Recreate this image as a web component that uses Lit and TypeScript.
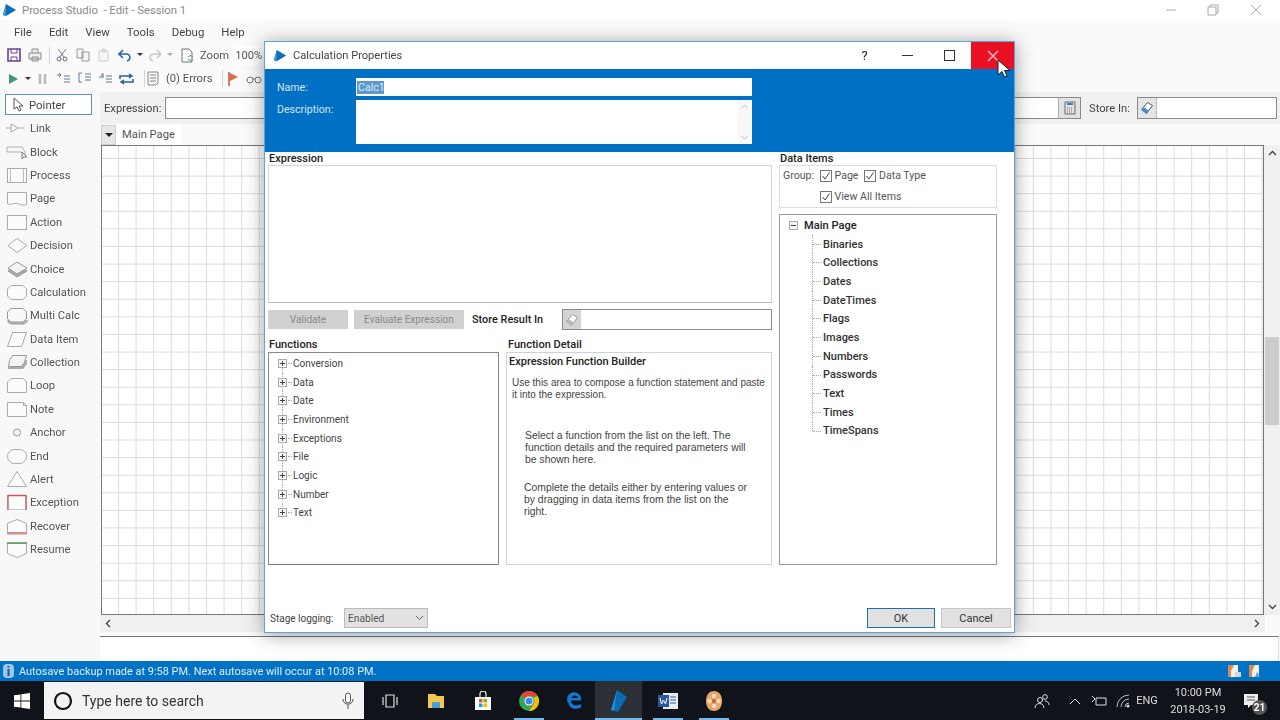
import { LitElement, html, css, svg } from "lit";
import { customElement } from "lit/decorators.js";

const S = (w: number, h: number, body: unknown) =>
  html`<svg width=${w} height=${h} viewBox="0 0 ${w} ${h}" fill="none">${body}</svg>`;

const palette: [string, unknown][] = [
  ["Link", svg`<path d="M6 11h5M18 11h6M11 7l7 4-7 4z" stroke="#a8a8a8"/>`],
  ["Block", svg`<path d="M7 6h15l3 5v3M7 6v5h15" stroke="#b0b0b0"/><path d="M22 11l0 7 2-2 3 0z" fill="#fff" stroke="#777"/>`],
  ["Process", svg`<rect x="7.5" y="4.5" width="19" height="14" stroke="#aaa" fill="#fbfbfb"/><path d="M10.5 5v13M23.5 5v13" stroke="#bbb"/>`],
  ["Page", svg`<path d="M7.5 5.5h19v12c-6 2-7-2-12-1s-5 1-7 0z" stroke="#aaa" fill="#fbfbfb"/>`],
  ["Action", svg`<rect x="7.5" y="4.5" width="19" height="14" stroke="#aaa" fill="#fbfbfb"/>`],
  ["Decision", svg`<path d="M8 11.5l9-7 10 7-10 7z" stroke="#aaa" fill="#fbfbfb"/>`],
  ["Choice", svg`<path d="M8 13l9 6 10-6-3-2-14 0z" fill="#aaa" stroke="#999"/><path d="M8 10l9-6 10 6-10 6z" stroke="#999" fill="#f4f4f4"/>`],
  ["Calculation", svg`<path d="M11 4.5h12l3.5 3.5v7L23 18.5H11L7.5 15V8z" stroke="#aaa" fill="#fbfbfb"/>`],
  ["Multi Calc", svg`<path d="M8 16v2l3 2h13l3-2v-2" stroke="#999" fill="#bbb"/><path d="M11 4.5h12l3.5 3.5v7L23 18H11L7.5 15V8z" stroke="#999" fill="#f8f8f8"/>`],
  ["Data Item", svg`<path d="M12.5 4.5h14l-5 14h-14z" stroke="#aaa" fill="#fbfbfb"/>`],
  ["Collection", svg`<path d="M8 15v3h15l4-5V9z" fill="#aaa"/><path d="M12.5 4.5h14l-2 7-3 4h-13l1-6z" stroke="#999" fill="#f4f4f4"/>`],
  ["Loop", svg`<path d="M11 4.5h12l3.5 3.5v10.5h-19V8z" stroke="#aaa" fill="#fbfbfb"/>`],
  ["Note", svg`<path d="M7.5 4.5h16l3 3v11h-19zM23.5 4.5v3h3" stroke="#aaa" fill="#fbfbfb"/>`],
  ["Anchor", svg`<circle cx="17" cy="11.5" r="3.5" stroke="#999" fill="#f5f5f5"/>`],
  ["End", svg`<rect x="7.5" y="4.5" width="19" height="14" rx="7" stroke="#aaa" fill="#fbfbfb"/>`],
  ["Alert", svg`<path d="M17 3.5l9.5 15h-19z" stroke="#aaa" fill="#fbfbfb"/>`],
  ["Exception", svg`<rect x="7.5" y="4.5" width="19" height="14" stroke="#c9c9c9" fill="#fbfbfb"/><path d="M8 4v15M26 4v15M8 4.5h18" stroke="#c5565c" stroke-width="1.3"/>`],
  ["Recover", svg`<path d="M7.5 8.5l9.5-4 9.5 4v9h-19z" stroke="#aaa" fill="#fbfbfb"/><path d="M7 18.5h20" stroke="#d98a8a" stroke-width="2"/>`],
  ["Resume", svg`<path d="M7.5 5.5h19v10l-9.5 4-9.5-4z" stroke="#aaa" fill="#fbfbfb"/><path d="M7 5h20" stroke="#5f9a6a" stroke-width="1.6"/>`],
];

const functions = ["Conversion", "Data", "Date", "Environment", "Exceptions", "File", "Logic", "Number", "Text"];
const dataItems = ["Binaries", "Collections", "Dates", "DateTimes", "Flags", "Images", "Numbers", "Passwords", "Text", "Times", "TimeSpans"];

const logo = (h: number) =>
  html`<svg width=${h} height=${h} viewBox="0 0 16 16"><path d="M4 2l10 6-10 6-3-1z" fill="#0f6cb8"/><path d="M4 2L1 13l3 1z" fill="#2d9be0"/></svg>`;
const eraser = (dim: boolean) =>
  html`<span class="eraser ${dim ? "dim" : ""}"><svg width="14" height="14" viewBox="0 0 14 14"><path d="M1.5 8.5l6-7 5 3-6 8z" fill="#fff" stroke=${dim ? "#999" : "#456"}/><path d="M1.5 8.5l5 4 2-3-4-3z" fill=${dim ? "#bbb" : "#3f8fd0"}/></svg></span>`;
const check = html`<span class="cb"><svg width="12" height="12" viewBox="0 0 12 12"><path d="M2.5 6l2.5 3 4.5-6.5" stroke="#444" fill="none"/></svg></span>`;

@customElement("app-root")
export class AppRoot extends LitElement {
  static styles = css`
    :host { display: block; width: 1280px; height: 720px; overflow: hidden; position: relative;
      font-family: Roboto, "Liberation Sans", sans-serif; font-size: 11.2px; color: #333; background: #fafafa; }
    .page { position: relative; width: 1280px; height: 720px; display: flex; flex-direction: column; filter: blur(0.35px); }
    .title { height: 20px; flex: none; display: flex; align-items: center; background: #fff; color: #8a8a8a; padding: 0 3px 0 2px; font-size: 11.3px; }
    .title .tx { margin-left: 4px; }
    .title .grow { flex: 1; }
    .wc { width: 42.5px; display: flex; justify-content: center; }
    .menu { height: 23px; flex: none; display: flex; align-items: center; padding-left: 14px; gap: 17px; font-size: 11.4px; color: #444; }
    .tbar { flex: none; display: flex; align-items: center; }
    .t1 { height: 24px; padding-left: 3px; }
    .t2 { height: 23px; padding-left: 2px; }
    .ti { width: 21px; display: flex; justify-content: center; flex: none; }
    .tn { width: 9px; display: flex; justify-content: center; flex: none; }
    .tw { width: 16px; display: flex; justify-content: center; flex: none; }
    .ts { width: 1px; height: 17px; background: #d5d5d5; flex: none; }
    .m4 { margin-left: 4px; margin-right: 1px; }
    .m7 { margin-left: 7px; }
    .m9 { margin-left: 9px; }
    .m2 { margin-left: 2px; }
    .zoom { margin-left: 3px; color: #555; }
    .pct { margin-left: 6px; background: #fff; padding: 3px 4px 3px 0; color: #555; }
    .err { margin-left: 5px; color: #555; }
    .main { flex: 1; min-height: 0; display: flex; }
    .palette { width: 100px; flex: none; padding: 4px 0 0 5px; box-sizing: border-box; background: #f8f8f8; }
    .ptr { width: 85px; height: 19px; border: 1px solid #5b93b5; background: #fff; display: flex; align-items: center; margin-bottom: 2px; box-sizing: content-box; font-size: 11.4px; color: #444; }
    .ptr svg { margin: 0 4px 0 6px; }
    .pi { height: 23.4px; display: flex; align-items: center; margin-left: -5px; color: #555; font-size: 11.2px; }
    .pi svg { flex: none; }
    .content { flex: 1; min-width: 0; display: flex; flex-direction: column; }
    .ebar { height: 32px; margin-top: 2px; flex: none; display: flex; align-items: center; background: #f0f0f0; padding-left: 4px; color: #444; }
    .expl { width: 55px; white-space: nowrap; }
    .field { height: 22px; background: #fff; border: 1px solid #8a8a8a; box-sizing: border-box; display: flex; }
    .f1 { width: 916px; margin-left: 6px; justify-content: flex-end; }
    .f2 { width: 140px; margin-left: 8px; }
    .calc { width: 21px; background: #e2e2e2; border-left: 1px solid #aaa; display: flex; align-items: center; justify-content: center; }
    .store { margin-left: 8px; width: 40px; white-space: nowrap; }
    .eraser { width: 18px; background: #e4e4e4; border-right: 1px solid #bbb; display: flex; align-items: center; justify-content: center; flex: none; }
    .eraser.dim { background: #d4d4d4; border: 0; }
    .tabs { height: 21px; flex: none; display: flex; align-items: flex-end; padding-left: 1px; box-sizing: border-box; }
    .tabdrop { width: 15px; height: 20px; background: #e6e6e6; border: 1px solid #ccc; box-sizing: border-box; display: flex; align-items: center; justify-content: center; }
    .tab { width: 65px; height: 21px; background: #fff; display: flex; align-items: center; justify-content: center; color: #555; }
    .cwrap { height: 470px; flex: none; display: flex; }
    .canvas { width: 1163px; margin-left: 1px; box-sizing: border-box; border: 1px solid #777; border-right-width: 1px;
      background-color: #fff;
      background-image: linear-gradient(#dadada 1px, transparent 1px), linear-gradient(90deg, #dadada 1px, transparent 1px);
      background-size: 17.6px 17.6px; background-position: 16px 12px; }
    .vscroll { flex: 1; background: #f0f0f0; display: flex; flex-direction: column; align-items: center; justify-content: space-between; padding: 5px 0; box-sizing: border-box; position: relative; }
    .thumb { position: absolute; top: 192px; left: 1px; width: 14px; height: 88px; background: #cdcdcd; }
    .hscroll { height: 17px; width: 1165px; flex: none; background: #f0f0f0; display: flex; align-items: center; justify-content: space-between; padding: 0 5px; box-sizing: border-box; }
    .bottom { height: 25px; margin-top: 4px; flex: none; background: #fff; border-top: 1px solid #777; border-right: 1px solid #ddd; width: 1179px; box-sizing: border-box; }
    .status { height: 20px; flex: none; background: #0072c6; display: flex; align-items: center; color: #e3eef7; font-size: 10.95px; padding-left: 2px; gap: 4px; }
    .status .grow { flex: 1; }
    .status .sr { display: flex; gap: 7px; padding-right: 18px; }
    .taskbar { height: 39px; flex: none; background: #10141a; display: flex; align-items: center; color: #fff; }
    .win { width: 44px; display: flex; justify-content: center; }
    .search { width: 320px; height: 37px; margin-right: 3px; background: #f3f3f3; color: #333; display: flex; align-items: center; box-sizing: border-box; padding: 0 9px 0 9px; font-size: 14px; }
    .search .q { flex: 1; margin-left: 9px; }
    .tk { width: 46.3px; height: 39px; display: flex; align-items: center; justify-content: center; position: relative; box-sizing: border-box; flex: none; }
    .tk.on::after { content: ""; position: absolute; left: 8px; right: 8px; bottom: 0; height: 2px; background: #76b9ed; }
    .tk.act { background: #2b3036; margin-left: -3px; margin-right: 3px; }
    .tk.act::after { left: 0; right: 0; }
    .tray { margin-left: auto; display: flex; align-items: center; color: #ddd; font-size: 11px; }
    .ty { width: 24px; display: flex; justify-content: center; }
    .clock { width: 78px; text-align: center; line-height: 17px; font-size: 11px; }
    .noti { width: 30px; margin-right: 14px; position: relative; display: flex; justify-content: center; margin-left: -1px; }
    .badge { position: absolute; left: 16px; top: 7px; width: 15px; height: 15px; border-radius: 50%; background: #555; color: #fff; font-size: 10px; font-weight: 700; display: flex; align-items: center; justify-content: center; }

    /* Dialog floats above the window */
    .dlg { position: absolute; left: 264px; top: 41px; width: 751px; height: 592px; background: #fff; border: 1px solid #5aa6dc; box-sizing: border-box; display: flex; flex-direction: column; box-shadow: 0 2px 18px rgba(0,0,0,.38); }
    .dt { height: 27px; flex: none; display: flex; align-items: center; padding-left: 8px; color: #444; font-size: 11.1px; }
    .dt .tx { margin-left: 5px; }
    .dt .grow { flex: 1; }
    .db { width: 42.7px; height: 27px; display: flex; align-items: center; justify-content: center; color: #222; font-size: 13px; flex: none; }
    .db.x { background: #e81123; }
    .dhead { height: 83px; flex: none; background: #0070c4; display: grid; grid-template-columns: 79px 396px; grid-template-rows: 18px 44px; row-gap: 4px; align-content: start; padding: 9px 0 0 12px; color: #d5e6f5; box-sizing: border-box; font-size: 10.6px; }
    .dhead .lb { align-self: center; }
    .dhead .lb2 { align-self: start; padding-top: 3px; }
    .nm { background: #fff; display: flex; align-items: center; padding-left: 1px; color: #fff; }
    .sel { background: #5a98d0; color: #dfe9f3; padding: 0 1px; font-size: 10.6px; width: 27px; box-sizing: border-box; }
    .ds { background: #fff; display: flex; justify-content: flex-end; }
    .sb { width: 15px; background: #f8f8f8; display: flex; flex-direction: column; justify-content: space-between; align-items: center; padding: 4px 0; box-sizing: border-box; }
    .dbody { flex: 1; min-height: 0; display: grid; grid-template-columns: 504px 218px; column-gap: 7px; padding-left: 3px; align-content: start; }
    .sec { font-weight: 500; color: #222; font-size: 11px; height: 13px; line-height: 13px; padding-left: 1px; }
    .col { display: flex; flex-direction: column; }
    .exp { height: 138px; border: 1px solid #d5d5d5; border-bottom-color: #bbb; box-sizing: border-box; background: #fff; }
    .vr { margin-top: 6px; height: 21px; display: flex; align-items: center; }
    .btn { height: 19px; background: #d0d0d0; color: #8a8a8a; display: flex; align-items: center; justify-content: center; font-size: 10.1px; flex: none; }
    .b1 { width: 80px; }
    .b2 { width: 110px; margin-left: 6px; }
    .sri { margin-left: 8px; font-weight: 500; color: #222; font-size: 10.9px; width: 90px; white-space: nowrap; }
    .srf { flex: 1; height: 21px; border: 1px solid #8a8a8a; box-sizing: border-box; display: flex; }
    .two { display: grid; grid-template-columns: 231px 266px; column-gap: 7px; margin-top: 8px; }
    .two .sec { margin-bottom: 1px; }
    .fd { padding-left: 2px; }
    .tree { height: 213px; border: 1px solid #888; border-bottom-color: #777; box-sizing: border-box; padding-top: 1px; }
    .row { height: 18.7px; display: flex; align-items: center; position: relative; color: #444; font-size: 10px; padding-left: 9px; }
    .row::before { content: ""; position: absolute; left: 13px; top: 0; bottom: 0; border-left: 1px dotted #aaa; }
    .row:first-child::before { top: 9px; }
    .row:last-child::before { bottom: 9px; }
    .row i { position: relative; width: 9px; height: 9px; border: 1px solid #aaa; background: #f5f5f5; box-sizing: border-box; flex: none; margin-right: 1px; }
    .row i::before { content: ""; position: absolute; left: 1px; right: 1px; top: 3px; height: 1px; background: #444; }
    .row i.p::after { content: ""; position: absolute; top: 1px; bottom: 1px; left: 3px; width: 1px; background: #444; }
    .row b { font-weight: 400; width: 4px; border-top: 1px dotted #aaa; margin-right: 1px; flex: none; position: relative; }
    .detail { height: 213px; border: 1px solid #ccd3da; box-sizing: border-box; padding: 2px 2px; }
    .dtitle { font-weight: 500; color: #222; font-size: 11px; height: 13px; line-height: 13px; }
    .dp { font-family: "Liberation Sans", Arial, sans-serif; font-size: 10.4px; line-height: 12px; color: #444; margin: 0; white-space: nowrap; }
    .p1 { margin: 9px 0 0 3px; font-size: 10px; }
    .p2 { margin: 29px 0 0 16px; }
    .p3 { margin: 16px 0 0 15px; }
    .grp { height: 43px; border: 1px solid #ddd; box-sizing: border-box; display: grid; grid-template-columns: 37px auto auto 1fr; grid-template-rows: 19px 23px; align-items: center; padding-left: 3px; color: #555; font-size: 10.6px; }
    .ck { display: flex; align-items: center; gap: 2.5px; margin-right: 6px; }
    .ck.span { grid-column: 2 / 5; }
    .cb { width: 12px; height: 12px; border: 1px solid #777; box-sizing: border-box; display: flex; align-items: center; justify-content: center; background: #fff; }
    .cb svg { flex: none; }
    .dtree { margin-top: 6px; height: 351px; border: 1px solid #999; box-sizing: border-box; padding: 1px 0 0 9px; }
    .droot { height: 18.7px; display: flex; align-items: center; font-weight: 500; color: #222; font-size: 11.1px; }
    .droot .mn { position: relative; width: 9px; height: 9px; border: 1px solid #aaa; background: #f5f5f5; box-sizing: border-box; margin-right: 6px; flex: none; }
    .droot .mn::before { content: ""; position: absolute; left: 1px; right: 1px; top: 3px; height: 1px; background: #444; }
    .dc { height: 18.7px; margin-left: 23px; padding-left: 10px; display: flex; align-items: center; font-weight: 500; color: #333; font-size: 11px; border-left: 1px dotted #aaa; position: relative; }
    .dc:last-child { border-left-color: transparent; }
    .dc:last-child::after { content: ""; position: absolute; left: -1px; top: 0; height: 9px; border-left: 1px dotted #aaa; }
    .dc::before { content: ""; position: absolute; left: 0; width: 8px; top: 9px; border-top: 1px dotted #aaa; }
    .foot { flex: none; display: flex; align-items: center; margin-bottom: 4px; height: 20px; padding: 0 3px 0 5px; }
    .foot .lbl { width: 74px; color: #444; font-size: 10px; white-space: nowrap; }
    .dd { width: 84px; height: 20px; background: #e2e2e2; border: 1px solid #bbb; box-sizing: border-box; display: flex; align-items: center; justify-content: space-between; padding: 0 3px; color: #555; font-size: 10.2px; }
    .foot .grow { flex: 1; }
    .ok, .cancel { height: 20px; background: #e1e1e1; display: flex; align-items: center; justify-content: center; color: #333; font-size: 11px; box-sizing: border-box; }
    .ok { width: 68px; border: 1.5px solid #1b6fb5; margin-right: 6px; }
    .cancel { width: 70px; border: 1px solid #c5c5c5; }
    .cursor { position: absolute; left: 997px; top: 59px; }
  `;

  render() {
    return html`<div class="page">
      <div class="title">
        ${logo(16)}<span class="tx">Process Studio&nbsp; - Edit - Session 1</span><span class="grow"></span>
        <span class="wc">${S(12, 12, svg`<path d="M1 6h10" stroke="#aaa"/>`)}</span>
        <span class="wc">${S(12, 12, svg`<path d="M3 3V1h8v8H9M1 3h8v8H1z" stroke="#aaa"/>`)}</span>
        <span class="wc">${S(12, 12, svg`<path d="M1 1l10 10M11 1L1 11" stroke="#aaa"/>`)}</span>
      </div>
      <div class="menu"><span>File</span><span>Edit</span><span>View</span><span>Tools</span><span>Debug</span><span>Help</span></div>
      <div class="tbar t1">
        <span class="ti">${S(14, 14, svg`<path d="M1 1h12v12H1z" stroke="#6a3f9a" stroke-width="1.6"/><path d="M4 1v4h6V1M4 13V9h6v4" stroke="#6a3f9a"/>`)}</span>
        <span class="ti">${S(14, 14, svg`<path d="M4 5V1h6v4M1 5h12v6H1zM4 9h6v4H4z" stroke="#888" fill="#eee"/>`)}</span>
        <span class="ts m4"></span>
        <span class="ti">${S(14, 14, svg`<path d="M3 1l6 8M11 1L5 9" stroke="#777"/><circle cx="4" cy="11" r="2" stroke="#5a6d85"/><circle cx="10" cy="11" r="2" stroke="#5a6d85"/>`)}</span>
        <span class="ti">${S(14, 14, svg`<path d="M1 1h6v9H1zM6 4h7v9H6z" stroke="#999" fill="#f4f4f4"/>`)}</span>
        <span class="ti">${S(14, 14, svg`<path d="M2 3h9v10H2zM5 1h3v3H5z" stroke="#ccc" fill="#f6f6f6"/>`)}</span>
        <span class="ti">${S(14, 14, svg`<path d="M5 2L1 6l4 4M1 6h7c5 0 5 6 1 7" stroke="#2a66a8" stroke-width="1.6"/>`)}</span>
        <span class="tn">${S(6, 4, svg`<path d="M0 0h6L3 3z" fill="#333"/>`)}</span>
        <span class="ti">${S(14, 14, svg`<path d="M9 2l4 4-4 4M13 6H6c-5 0-5 6-1 7" stroke="#c8c8c8" stroke-width="1.5"/>`)}</span>
        <span class="tn">${S(6, 4, svg`<path d="M0 0h6L3 3z" fill="#aaa"/>`)}</span>
        <span class="ti m2">${S(14, 15, svg`<path d="M2 1h7l3 3v10H2z" stroke="#777" fill="#fafafa"/><path d="M8 11a3 3 0 005 0M8 9a3 3 0 015 0" stroke="#5a9a7a"/>`)}</span>
        <span class="zoom">Zoom</span><span class="pct">100%</span>
      </div>
      <div class="tbar t2">
        <span class="ti">${S(12, 12, svg`<path d="M2 1l9 5-9 5z" fill="#3f9a78"/>`)}</span>
        <span class="tn">${S(6, 4, svg`<path d="M0 0h6L3 3z" fill="#333"/>`)}</span>
        <span class="ti">${S(12, 12, svg`<path d="M3 1v10M8 1v10" stroke="#bbb" stroke-width="2.6"/>`)}</span>
        <span class="ti">${S(15, 14, svg`<path d="M1 3h4M3 1l2 2-2 2M8 4h6M8 7h6M8 10h6" stroke="#5a7a95"/>`)}</span>
        <span class="ti">${S(15, 14, svg`<path d="M5 1H2v9h3M8 2h6M8 5h6M8 8h6" stroke="#5a7a95"/>`)}</span>
        <span class="ti">${S(15, 14, svg`<path d="M1 5h3V2M5 1v5M8 4h6M8 7h6M8 10h6" stroke="#5a7a95"/>`)}</span>
        <span class="ti">${S(15, 14, svg`<path d="M1 7V4h11M10 2l3 2-3 2M14 7v3H3M5 12l-3-2 3-2" stroke="#2a5f95" stroke-width="1.5"/>`)}</span>
        <span class="ts m7"></span>
        <span class="tw">${S(13, 15, svg`<path d="M1 1h10v11l-2 2H1zM3 4h6M3 7h6M3 10h6" stroke="#888" fill="#f5f5f5"/>`)}</span>
        <span class="err">(0) Errors</span>
        <span class="ts m9"></span>
        <span class="ti">${S(12, 14, svg`<path d="M2 0v14" stroke="#b5482d" stroke-width="1.4"/><path d="M3 1l8 4-8 4z" fill="#e06a3c"/>`)}</span>
        <span class="ti">${S(16, 10, svg`<circle cx="4" cy="6" r="3" stroke="#777"/><circle cx="12" cy="6" r="3" stroke="#777"/><path d="M7 5h2" stroke="#777"/>`)}</span>
      </div>
      <div class="main">
        <div class="palette">
          <div class="ptr">${S(13, 15, svg`<path d="M2 1v11l3-2 2 4 2-1-2-4h4z" fill="#fff" stroke="#555"/>`)}Pointer</div>
          ${palette.map(([n, i]) => html`<div class="pi">${S(30, 23, i)}${n}</div>`)}
        </div>
        <div class="content">
          <div class="ebar">
            <span class="expl">Expression:</span>
            <span class="field f1"><span class="calc">${S(12, 14, svg`<path d="M1 1h10v12H1z" stroke="#667"/><path d="M3 3h6" stroke="#4477aa" stroke-width="2"/><path d="M3 7h6M3 9h6M3 11h6" stroke="#778" stroke-dasharray="1 1"/>`)}</span></span>
            <span class="store">Store In:</span>
            <span class="field f2">${eraser(false)}</span>
          </div>
          <div class="tabs"><span class="tabdrop">${S(8, 5, svg`<path d="M0 0h8L4 4z" fill="#222"/>`)}</span><span class="tab">Main Page</span></div>
          <div class="cwrap">
            <div class="canvas"></div>
            <div class="vscroll">
              ${S(9, 6, svg`<path d="M1 5l3.5-3.5L8 5" stroke="#444" stroke-width="1.4"/>`)}
              <span class="thumb"></span>
              ${S(9, 6, svg`<path d="M1 1l3.5 3.5L8 1" stroke="#444" stroke-width="1.4"/>`)}
            </div>
          </div>
          <div class="hscroll">
            ${S(6, 9, svg`<path d="M5 1L1.5 4.5 5 8" stroke="#444" stroke-width="1.4"/>`)}
            ${S(6, 9, svg`<path d="M1 1l3.5 3.5L1 8" stroke="#444" stroke-width="1.4"/>`)}
          </div>
          <div class="bottom"></div>
        </div>
      </div>
      <div class="status">
        ${S(13, 16, svg`<rect x="1" y="1" width="11" height="14" rx="4" fill="#9fc6e6"/><path d="M6.5 6v7M6.5 3v1.5" stroke="#0b5c9c" stroke-width="2"/>`)}
        <span>Autosave backup made at 9:58 PM. Next autosave will occur at 10:08 PM.</span>
        <span class="grow"></span>
        <span class="sr">
          ${S(14, 14, svg`<path d="M1 1h10v12H1z" fill="#f1f1f1"/><path d="M1 1h6l-3 6v6H1z" fill="#d88a50"/><rect x="8" y="8" width="6" height="5" fill="#cfd8e0"/>`)}
          ${S(14, 14, svg`<path d="M1 1h10v12H1z" fill="#f1f1f1"/><path d="M1 1h6l-3 6v6H1z" fill="#d88a50"/><path d="M9 8l3 5H7z" fill="#6aa0d0"/>`)}
        </span>
      </div>
      <div class="taskbar">
        <span class="win">${S(16, 16, svg`<path d="M0 2.3l6.5-.9v6.2H0zM7.3 1.3L16 0v7.6H7.3zM0 8.4h6.5v6.2L0 13.7zM7.3 8.4H16V16l-8.7-1.2z" fill="#fff"/>`)}</span>
        <span class="search">
          ${S(20, 20, svg`<circle cx="10" cy="10" r="8" stroke="#111" stroke-width="2.2"/>`)}
          <span class="q">Type here to search</span>
          ${S(14, 18, svg`<rect x="4.5" y="1" width="5" height="10" rx="2.5" stroke="#555"/><path d="M2 7c0 7 10 7 10 0M7 13v4" stroke="#555"/>`)}
        </span>
        <span class="tk">${S(16, 14, svg`<path d="M4 1h8v12H4zM1 3v8M15 3v8" stroke="#ddd" stroke-width="1.2"/>`)}</span>
        <span class="tk">${S(18, 16, svg`<path d="M1 1h7l2 2h7v12H1z" fill="#f2c94c"/><rect x="5" y="9" width="8" height="6" fill="#4a9fd8"/>`)}</span>
        <span class="tk">${S(18, 20, svg`<path d="M1 6h16v13H1z" fill="#fff"/><path d="M6 6V3a3 3 0 016 0v3" stroke="#ddd" stroke-width="1.3"/><rect x="5" y="8" width="3.5" height="3.5" fill="#f25022"/><rect x="9.5" y="8" width="3.5" height="3.5" fill="#7fba00"/><rect x="5" y="12.5" width="3.5" height="3.5" fill="#00a4ef"/><rect x="9.5" y="12.5" width="3.5" height="3.5" fill="#ffb900"/>`)}</span>
        <span class="tk on">${S(20, 20, svg`<circle cx="10" cy="10" r="10" fill="#34a853"/><path d="M10 0a10 10 0 018.7 5H10a5 5 0 00-4.5 3L2.5 3.5A10 10 0 0110 0z" fill="#ea4335"/><path d="M18.7 5A10 10 0 0110 20l4.3-6.5A5 5 0 0014 7z" fill="#fbbc05"/><circle cx="10" cy="10" r="4.5" fill="#fff"/><circle cx="10" cy="10" r="3.5" fill="#4285f4"/>`)}</span>
        <span class="tk">${S(18, 18, svg`<path d="M3 12a7 7 0 1112-3.5H5c0 5 6 6 10 3.5v3.5c-6 3-12 .5-12-3.5zM5.500 6h6.500c-.5-3.500-5.500-3.500-6.500 0z" fill="#0f78d4"/>`)}</span>
        <span class="tk act on">${S(18, 24, svg`<path d="M7 1l10 7-9 15-7-2z" fill="#0b6bb5"/><path d="M7 1L1 21l3 1z" fill="#1f8fd8"/>`)}</span>
        <span class="tk on">${S(20, 18, svg`<rect x="5" y="1" width="15" height="16" fill="#e8eef5"/><path d="M12 5h6M12 8h6M12 11h6" stroke="#2b579a"/><rect y="3" width="11" height="12" fill="#2b579a"/><path d="M2 6l1.5 6 2-4 2 4L9 6" stroke="#fff"/>`)}</span>
        <span class="tk on">${S(18, 22, svg`<path d="M9 1c4 0 8 3 8 10s-4 10-8 10-8-3-8-10S5 1 9 1z" fill="#e8a66a"/><circle cx="9" cy="6" r="2.3" fill="#f7dcc0"/><circle cx="9" cy="16" r="2.3" fill="#f7dcc0"/><circle cx="4.5" cy="11" r="2.3" fill="#f7dcc0"/><circle cx="13.5" cy="11" r="2.3" fill="#f7dcc0"/><circle cx="9" cy="11" r="2" fill="#c9602e"/>`)}</span>
        <span class="tray">
          <span class="ty">${S(16, 16, svg`<circle cx="6" cy="7" r="2.5" stroke="#ddd"/><circle cx="11" cy="4" r="2.3" stroke="#ddd"/><path d="M1 15c0-6 9-6 9 0M11 8c2 0 4 1 4 4" stroke="#ddd"/>`)}</span>
          <span class="ty m9">${S(12, 8, svg`<path d="M1 7l5-5 5 5" stroke="#ddd"/>`)}</span>
          <span class="ty">${S(16, 12, svg`<path d="M5 3h10v7H5zM1 1l3 3-3 3" stroke="#ddd"/>`)}</span>
          <span class="ty">${S(14, 14, svg`<path d="M1 13a12 12 0 0112-12M5 13a8 8 0 018-8M9 13a4 4 0 014-4" stroke="#bbb"/><circle cx="12" cy="12" r="1.5" fill="#ddd"/>`)}</span>
          <span class="ty">ENG</span>
          <span class="clock">10:00 PM<br />2018-03-19</span>
          <span class="noti">${S(16, 16, svg`<path d="M1 1h14v11H8l-3 3v-3H1z" fill="#eee"/><path d="M4 4h8M4 7h8" stroke="#555"/>`)}<span class="badge">21</span></span>
        </span>
      </div>

      <div class="dlg">
        <div class="dt">${logo(15)}<span class="tx">Calculation Properties</span><span class="grow"></span>
          <span class="db">?</span>
          <span class="db">${S(11, 11, svg`<path d="M0 5.5h11" stroke="#333"/>`)}</span>
          <span class="db">${S(11, 11, svg`<rect x=".5" y=".5" width="10" height="10" stroke="#333"/>`)}</span>
          <span class="db x">${S(12, 12, svg`<path d="M1 1l10 10M11 1L1 11" stroke="#fbd0d5" stroke-width="1.2"/>`)}</span>
        </div>
        <div class="dhead">
          <span class="lb">Name:</span>
          <span class="nm"><span class="sel">Calc1</span></span>
          <span class="lb2">Description:</span>
          <span class="ds"><span class="sb">${S(7, 5, svg`<path d="M.5 4l3-3 3 3" stroke="#bbb"/>`)}${S(7, 5, svg`<path d="M.5 1l3 3 3-3" stroke="#bbb"/>`)}</span></span>
        </div>
        <div class="dbody">
          <div class="col">
            <div class="sec">Expression</div>
            <div class="exp"></div>
            <div class="vr">
              <span class="btn b1">Validate</span>
              <span class="btn b2">Evaluate Expression</span>
              <span class="sri">Store Result In</span>
              <span class="srf">${eraser(true)}</span>
            </div>
            <div class="two">
              <div>
                <div class="sec">Functions</div>
                <div class="tree">
                  ${functions.map((f) => html`<div class="row"><i class="p"></i><b></b>${f}</div>`)}
                </div>
              </div>
              <div>
                <div class="sec fd">Function Detail</div>
                <div class="detail">
                  <div class="dtitle">Expression Function Builder</div>
                  <p class="dp p1">Use this area to compose a function statement and paste<br />it into the expression.</p>
                  <p class="dp p2">Select a function from the list on the left. The<br />function details and the required parameters will<br />be shown here.</p>
                  <p class="dp p3">Complete the details either by entering values or<br />by dragging in data items from the list on the<br />right.</p>
                </div>
              </div>
            </div>
          </div>
          <div class="col">
            <div class="sec">Data Items</div>
            <div class="grp">
              <span>Group:</span>
              <span class="ck">${check}<span>Page</span></span>
              <span class="ck">${check}<span>Data Type</span></span>
              <span></span>
              <span></span>
              <span class="ck span">${check}<span>View All Items</span></span>
            </div>
            <div class="dtree">
              <div class="droot"><span class="mn"></span>Main Page</div>
              <div>${dataItems.map((d) => html`<div class="dc"><span>${d}</span></div>`)}</div>
            </div>
          </div>
        </div>
        <div class="foot">
          <span class="lbl">Stage logging:</span>
          <span class="dd">Enabled ${S(9, 6, svg`<path d="M1 1l3.5 3.5L8 1" stroke="#666"/>`)}</span>
          <span class="grow"></span>
          <span class="ok">OK</span>
          <span class="cancel">Cancel</span>
        </div>
      </div>
      <span class="cursor">${S(14, 20, svg`<path d="M1 1v15l4-3.5 2.5 5.5 2.5-1-2.5-5.5H13z" fill="#fff" stroke="#222"/>`)}</span>
    </div>`;
  }
}
